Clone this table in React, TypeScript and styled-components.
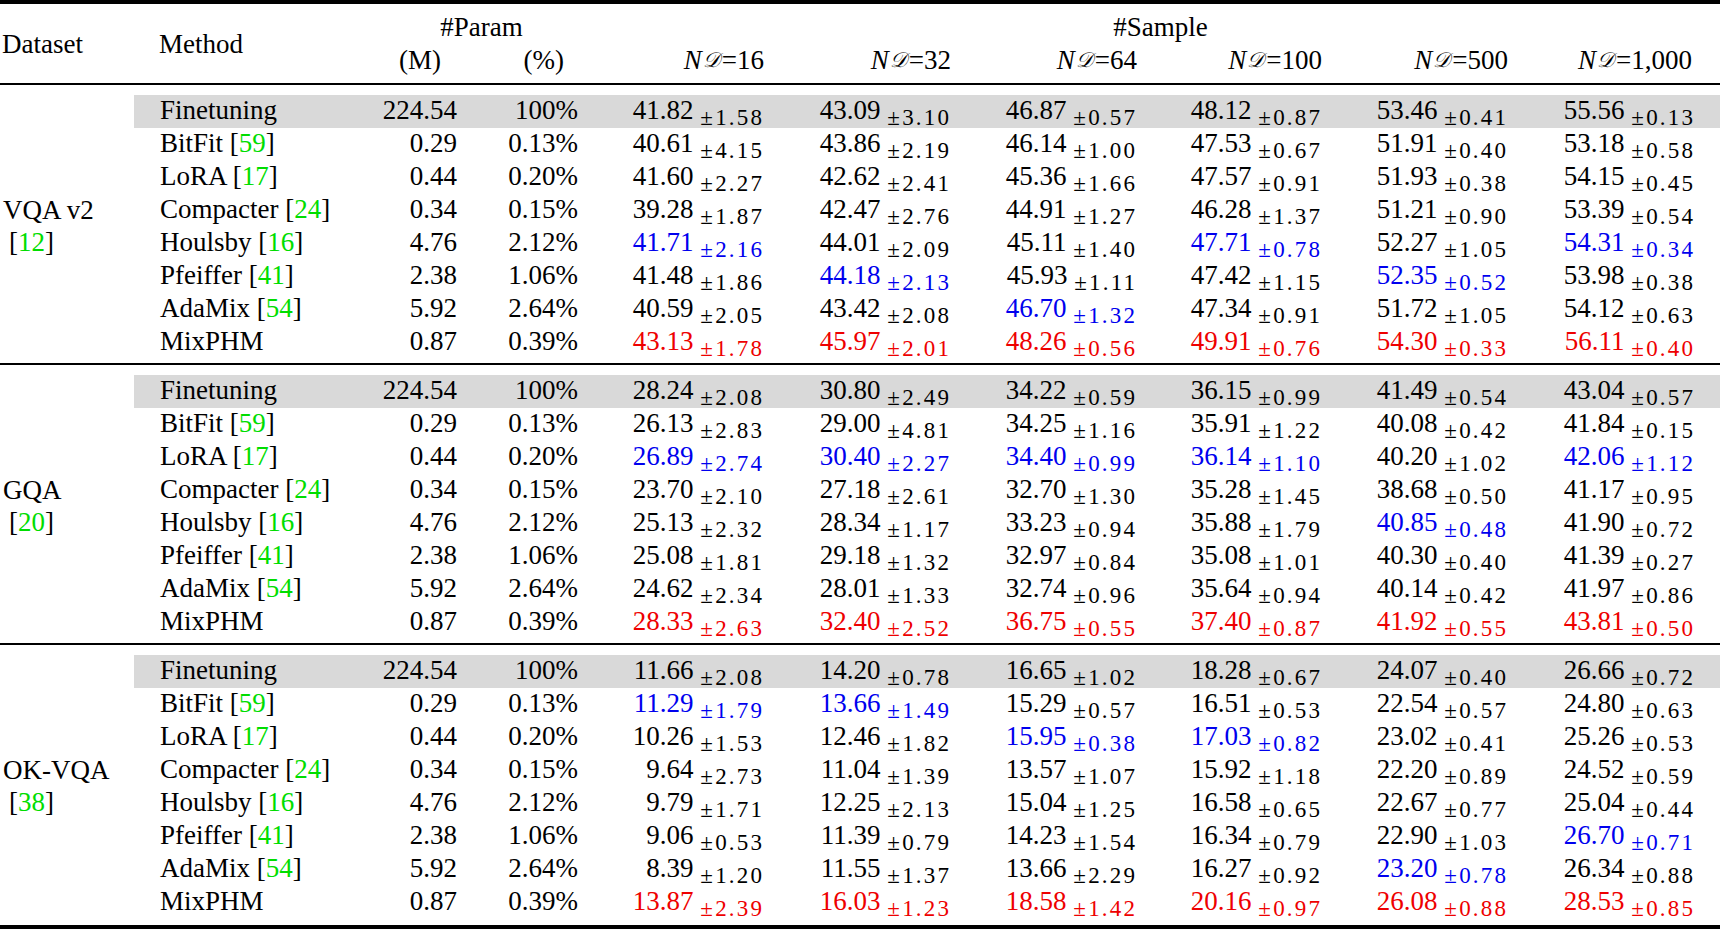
import React from "react";
import styled, { createGlobalStyle } from "styled-components";

const GlobalStyle = createGlobalStyle`
  html, body {
    margin: 0;
    padding: 0;
    background: #ffffff;
  }
  body {
    font-family: "Liberation Serif", "Times New Roman", serif;
    color: #000000;
  }
`;

type Tone = "plain" | "blue" | "red";

const toneColor = (t: Tone) =>
  t === "blue" ? "#0000ee" : t === "red" ? "#ee0000" : "#000000";

const COLUMNS = "134px 206px 130px 121px 184px 187px 186px 185px 186px 201px";

const methods: [string, string | null, string, string][] = [
  ["Finetuning", null, "224.54", "100%"],
  ["BitFit", "59", "0.29", "0.13%"],
  ["LoRA", "17", "0.44", "0.20%"],
  ["Compacter", "24", "0.34", "0.15%"],
  ["Houlsby", "16", "4.76", "2.12%"],
  ["Pfeiffer", "41", "2.38", "1.06%"],
  ["AdaMix", "54", "5.92", "2.64%"],
  ["MixPHM", null, "0.87", "0.39%"],
];

// b = second best (blue), r = best (red)
const sections = [
  {
    name: "VQA v2",
    cite: "12",
    rows: [
      "41.82/1.58 43.09/3.10 46.87/0.57 48.12/0.87 53.46/0.41 55.56/0.13",
      "40.61/4.15 43.86/2.19 46.14/1.00 47.53/0.67 51.91/0.40 53.18/0.58",
      "41.60/2.27 42.62/2.41 45.36/1.66 47.57/0.91 51.93/0.38 54.15/0.45",
      "39.28/1.87 42.47/2.76 44.91/1.27 46.28/1.37 51.21/0.90 53.39/0.54",
      "b41.71/2.16 44.01/2.09 45.11/1.40 b47.71/0.78 52.27/1.05 b54.31/0.34",
      "41.48/1.86 b44.18/2.13 45.93/1.11 47.42/1.15 b52.35/0.52 53.98/0.38",
      "40.59/2.05 43.42/2.08 b46.70/1.32 47.34/0.91 51.72/1.05 54.12/0.63",
      "r43.13/1.78 r45.97/2.01 r48.26/0.56 r49.91/0.76 r54.30/0.33 r56.11/0.40",
    ],
  },
  {
    name: "GQA",
    cite: "20",
    rows: [
      "28.24/2.08 30.80/2.49 34.22/0.59 36.15/0.99 41.49/0.54 43.04/0.57",
      "26.13/2.83 29.00/4.81 34.25/1.16 35.91/1.22 40.08/0.42 41.84/0.15",
      "b26.89/2.74 b30.40/2.27 b34.40/0.99 b36.14/1.10 40.20/1.02 b42.06/1.12",
      "23.70/2.10 27.18/2.61 32.70/1.30 35.28/1.45 38.68/0.50 41.17/0.95",
      "25.13/2.32 28.34/1.17 33.23/0.94 35.88/1.79 b40.85/0.48 41.90/0.72",
      "25.08/1.81 29.18/1.32 32.97/0.84 35.08/1.01 40.30/0.40 41.39/0.27",
      "24.62/2.34 28.01/1.33 32.74/0.96 35.64/0.94 40.14/0.42 41.97/0.86",
      "r28.33/2.63 r32.40/2.52 r36.75/0.55 r37.40/0.87 r41.92/0.55 r43.81/0.50",
    ],
  },
  {
    name: "OK-VQA",
    cite: "38",
    rows: [
      "11.66/2.08 14.20/0.78 16.65/1.02 18.28/0.67 24.07/0.40 26.66/0.72",
      "b11.29/1.79 b13.66/1.49 15.29/0.57 16.51/0.53 22.54/0.57 24.80/0.63",
      "10.26/1.53 12.46/1.82 b15.95/0.38 b17.03/0.82 23.02/0.41 25.26/0.53",
      "9.64/2.73 11.04/1.39 13.57/1.07 15.92/1.18 22.20/0.89 24.52/0.59",
      "9.79/1.71 12.25/2.13 15.04/1.25 16.58/0.65 22.67/0.77 25.04/0.44",
      "9.06/0.53 11.39/0.79 14.23/1.54 16.34/0.79 22.90/1.03 b26.70/0.71",
      "8.39/1.20 11.55/1.37 13.66/2.29 16.27/0.92 b23.20/0.78 26.34/0.88",
      "r13.87/2.39 r16.03/1.23 r18.58/1.42 r20.16/0.97 r26.08/0.88 r28.53/0.85",
    ],
  },
];

const sampleSizes = ["16", "32", "64", "100", "500", "1,000"];

const parseRow = (row: string) =>
  row.split(" ").map((tok) => {
    let tone: Tone = "plain";
    if (tok[0] === "b") tone = "blue";
    if (tok[0] === "r") tone = "red";
    const [mean, sd] = tok.replace(/^[br]/, "").split("/");
    return { tone, mean, sd };
  });

const Page = styled.div`
  width: 1720px;
`;

const Rule = styled.div<{ $h: number; $mt?: number; $mb?: number }>`
  height: ${(p) => p.$h}px;
  margin-top: ${(p) => p.$mt ?? 0}px;
  margin-bottom: ${(p) => p.$mb ?? 0}px;
  background: #000000;
`;

const Grid = styled.div`
  display: grid;
  grid-template-columns: ${COLUMNS};
  grid-auto-rows: 33px;
  font-size: 27px;
  line-height: 31px;
`;

const Header = styled(Grid)`
  padding-top: 7px;
`;

const HeadCell = styled.div<{
  $col: string;
  $row: string;
  $align?: "left" | "center" | "right";
  $pl?: number;
  $pr?: number;
}>`
  grid-column: ${(p) => p.$col};
  grid-row: ${(p) => p.$row};
  display: flex;
  align-items: center;
  justify-content: ${(p) =>
    p.$align === "right" ? "flex-end" : p.$align === "center" ? "center" : "flex-start"};
  padding-left: ${(p) => p.$pl ?? 0}px;
  padding-right: ${(p) => p.$pr ?? 0}px;
  white-space: nowrap;
`;

const MathN = styled.span`
  font-style: italic;
`;

const Sub = styled.span`
  font-family: "DejaVu Serif", "DejaVu Sans", "Liberation Serif", serif;
  font-style: italic;
  font-size: 21px;
  vertical-align: -6px;
  line-height: 21px;
  margin-left: 1px;
  margin-right: 2px;
`;

const DatasetCell = styled.div`
  grid-column: 1;
  grid-row: 1 / span 8;
  display: flex;
  flex-direction: column;
  justify-content: center;
  padding-left: 3px;
  line-height: 32px;
  padding-bottom: 2px;
`;

const CiteLine = styled.span`
  padding-left: 6px;
`;

const Cite = styled.span`
  color: #00dd00;
`;

const MethodCell = styled.div<{ $shade: boolean }>`
  background: ${(p) => (p.$shade ? "#d9d9d9" : "transparent")};
  padding-left: 26px;
  white-space: nowrap;
`;

const NumCell = styled.div<{ $shade: boolean; $pr: number }>`
  background: ${(p) => (p.$shade ? "#d9d9d9" : "transparent")};
  text-align: right;
  padding-right: ${(p) => p.$pr}px;
  white-space: nowrap;
`;

const Mean = styled.span<{ $tone: Tone }>`
  color: ${(p) => toneColor(p.$tone)};
`;

const Spread = styled.span<{ $tone: Tone }>`
  color: ${(p) => toneColor(p.$tone)};
  font-size: 23px;
  letter-spacing: 2.2px;
  margin-right: -2.2px;
  vertical-align: -6px;
  line-height: 23px;
`;

const MethodName = ({ name, cite }: { name: string; cite: string | null }) => (
  <>
    {name}
    {cite && (
      <>
        {" "}[<Cite>{cite}</Cite>]
      </>
    )}
  </>
);

export default function App() {
  return (
    <Page>
      <GlobalStyle />
      <Rule $h={4} />
      <Header>
        <HeadCell $col="1" $row="1 / span 2" $pl={2}>
          Dataset
        </HeadCell>
        <HeadCell $col="2" $row="1 / span 2" $pl={25}>
          Method
        </HeadCell>
        <HeadCell $col="3 / span 2" $row="1" $align="center" $pl={44} $pr={12}>
          #Param
        </HeadCell>
        <HeadCell $col="5 / span 6" $row="1" $align="center" $pl={37} $pr={27}>
          #Sample
        </HeadCell>
        <HeadCell $col="3" $row="2" $align="right" $pr={29}>
          (M)
        </HeadCell>
        <HeadCell $col="4" $row="2" $align="right" $pr={27}>
          (%)
        </HeadCell>
        {sampleSizes.map((n, i) => (
          <HeadCell
            key={n}
            $col={String(5 + i)}
            $row="2"
            $align="right"
            $pr={i === sampleSizes.length - 1 ? 28 : 11}
          >
            <MathN>N</MathN>
            <Sub>𝒟</Sub>={n}
          </HeadCell>
        ))}
      </Header>
      <Rule $h={2} $mt={6} $mb={10} />
      {sections.map((sec, si) => (
        <React.Fragment key={sec.name}>
          {si > 0 && <Rule $h={2} $mt={4} $mb={10} />}
          <Grid>
            <DatasetCell>
              <span>{sec.name}</span>
              <CiteLine>
                [<Cite>{sec.cite}</Cite>]
              </CiteLine>
            </DatasetCell>
            {sec.rows.map((row, ri) => {
              const [name, cite, mParam, pParam] = methods[ri];
              const shade = ri === 0;
              return (
                <React.Fragment key={name}>
                  <MethodCell $shade={shade}>
                    <MethodName name={name} cite={cite} />
                  </MethodCell>
                  <NumCell $shade={shade} $pr={13}>
                    {mParam}
                  </NumCell>
                  <NumCell $shade={shade} $pr={13}>
                    {pParam}
                  </NumCell>
                  {parseRow(row).map((v, ci) => (
                    <NumCell key={ci} $shade={shade} $pr={ci === 5 ? 27 : 13}>
                      <Mean $tone={v.tone}>{v.mean}</Mean>{" "}
                      <Spread $tone={v.tone}>±{v.sd}</Spread>
                    </NumCell>
                  ))}
                </React.Fragment>
              );
            })}
          </Grid>
        </React.Fragment>
      ))}
      <Rule $h={4} $mt={6} />
    </Page>
  );
}
